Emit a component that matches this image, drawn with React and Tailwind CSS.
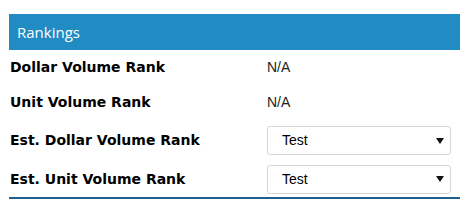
export default function App() {
  const rows = [
    { label: 'Dollar Volume Rank', value: 'N/A' },
    { label: 'Unit Volume Rank', value: 'N/A' },
  ]
  const selects = ['Est. Dollar Volume Rank', 'Est. Unit Volume Rank']

  return (
    <div className="w-[468px] h-[208px] bg-white pt-[14px] pl-[9px]">
      <div className="w-[451px] border-b-2 border-[#1f5f8f]">
        <div className="h-[36px] bg-[#218bc3] flex items-center pl-[8px] text-white text-[15px] font-['Open_Sans',sans-serif]">
          Rankings
        </div>
        {rows.map((r) => (
          <div key={r.label} className="h-[35px] flex items-center">
            <div className="w-[258px] pl-[1px] font-bold text-[14px] text-black font-['Verdana','DejaVu_Sans',sans-serif]">
              {r.label}
            </div>
            <div className="text-[14px] text-[#222] font-['Liberation_Sans',Arial,sans-serif]">{r.value}</div>
          </div>
        ))}
        {selects.map((label, i) => (
          <div key={label} className={i === 0 ? 'h-[41px] flex items-center' : 'h-[36px] flex items-center'}>
            <div className="w-[258px] pl-[1px] font-bold text-[14px] text-black font-['Verdana','DejaVu_Sans',sans-serif]">
              {label}
            </div>
            <div className="w-[184px] h-[29px] border border-[#d6d6d6] rounded-[3px] flex items-center justify-between pl-[14px] pr-[6px] text-[14px] text-black font-['Liberation_Sans',Arial,sans-serif]">
              <span>Test</span>
              <svg width="8" height="6" viewBox="0 0 8 6">
                <path d="M0 0 H8 L4 6 Z" fill="#111" />
              </svg>
            </div>
          </div>
        ))}
      </div>
    </div>
  )
}
